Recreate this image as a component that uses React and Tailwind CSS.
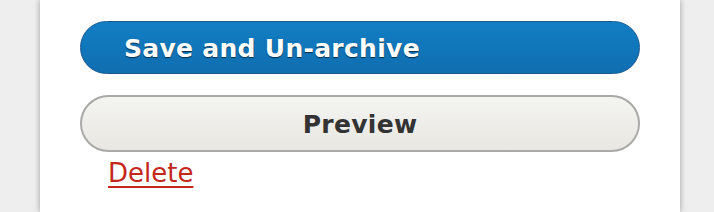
export default function App() {
  return (
    <div className="h-[212px] w-[714px] overflow-hidden bg-[#efeeee] font-['DejaVu_Sans',sans-serif]">
      <div className="ml-[40px] h-full w-[640px] bg-white px-[40px] pt-[21px] shadow-[0_0_6px_rgba(0,0,0,0.35)]">
        <button className="flex h-[53px] w-full items-center rounded-full border border-[#1a5a8e] bg-gradient-to-b from-[#137ec4] to-[#0f6eb0] pl-[43px] pt-[3px] text-[25px] font-bold tracking-[0.3px] text-white [text-shadow:0_1px_1px_rgba(0,0,0,0.6)]">
          Save and Un-archive
        </button>
        <button className="mt-[21px] flex h-[57px] w-full items-center justify-center rounded-full border-2 border-[#a9a9a7] bg-gradient-to-b from-[#f4f4f1] to-[#e8e7e1] pt-[2px] text-[25px] font-bold tracking-[0.3px] text-[#333]">
          Preview
        </button>
        <a href="#" className="mt-[6px] ml-[28px] inline-block text-[26px] leading-[30px] text-[#c4281b] underline underline-offset-[4px]">
          Delete
        </a>
      </div>
    </div>
  )
}
